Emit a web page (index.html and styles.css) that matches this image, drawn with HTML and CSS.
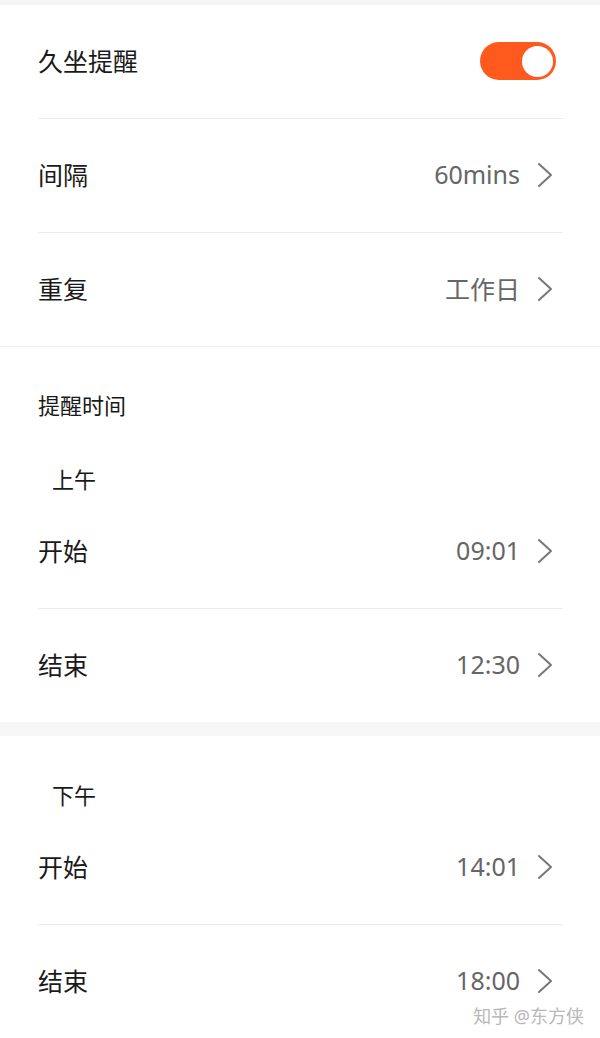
FILE: index.html
```html
<!DOCTYPE html>
<html lang="zh-CN">
<head>
    <meta charset="UTF-8">
    <meta name="viewport" content="width=device-width, initial-scale=1.0">
    <title>久坐提醒</title>
    <link rel="stylesheet" href="styles.css">
</head>
<body>
    <div id="settings-page">
        <div class="top-band"></div>

        <div class="group group-main">
            <div class="row">
                <span class="label">久坐提醒</span>
                <div class="toggle on"><div class="knob"></div></div>
            </div>
            <div class="row">
                <span class="label">间隔</span>
                <span class="value">60mins</span>
                <svg class="chevron" viewBox="0 0 16 26"><polyline points="2,2 14,13 2,24"/></svg>
            </div>
            <div class="row">
                <span class="label">重复</span>
                <span class="value">工作日</span>
                <svg class="chevron" viewBox="0 0 16 26"><polyline points="2,2 14,13 2,24"/></svg>
            </div>
        </div>

        <div class="group">
            <div class="group-title">提醒时间</div>
            <div class="sub-title">上午</div>
            <div class="row">
                <span class="label">开始</span>
                <span class="value">09:01</span>
                <svg class="chevron" viewBox="0 0 16 26"><polyline points="2,2 14,13 2,24"/></svg>
            </div>
            <div class="row">
                <span class="label">结束</span>
                <span class="value">12:30</span>
                <svg class="chevron" viewBox="0 0 16 26"><polyline points="2,2 14,13 2,24"/></svg>
            </div>
        </div>

        <div class="spacer"></div>

        <div class="group">
            <div class="sub-title sub-title-first">下午</div>
            <div class="row">
                <span class="label">开始</span>
                <span class="value">14:01</span>
                <svg class="chevron" viewBox="0 0 16 26"><polyline points="2,2 14,13 2,24"/></svg>
            </div>
            <div class="row">
                <span class="label">结束</span>
                <span class="value">18:00</span>
                <svg class="chevron" viewBox="0 0 16 26"><polyline points="2,2 14,13 2,24"/></svg>
            </div>
        </div>

        <div class="watermark">知乎 @东方侠</div>
    </div>
</body>
</html>
```

FILE: styles.css
```css
body, html {
    margin: 0;
    height: 100%;
    background-color: #fff;
    font-family: "Noto Sans", "Noto Sans CJK SC", sans-serif;
}
#settings-page {
    position: relative;
    width: 600px;
    height: 1038px;
    overflow: hidden;
    background-color: #fff;
}
.top-band {
    height: 5px;
    background-color: #f5f5f5;
}
.group {
    padding: 0 37px 0 38px;
}
.group-main {
    border-bottom: 1px solid #f0f0f0;
}
.row {
    display: flex;
    align-items: center;
    height: 109px;
    padding-bottom: 4px; /* glyphs sit low, nudge the content up */
    border-bottom: 1px solid #ececec;
}
.row:last-child {
    border-bottom: none;
}
.label {
    flex-grow: 1;
    font-size: 25px;
    color: #1a1a1a;
}
.value {
    font-size: 25px;
    color: #666;
    margin-right: 17px;
}
.chevron {
    width: 16px;
    height: 26px;
    margin-right: 10px;
    margin-top: 2px;
    fill: none;
    stroke: #777;
    stroke-width: 2;
    stroke-linecap: round;
    stroke-linejoin: round;
}
.toggle {
    width: 76px;
    height: 38px;
    border-radius: 19px;
    background-color: #ff5a1e;
    display: flex;
    align-items: center;
    justify-content: flex-end;
    margin-right: 7px;
    margin-top: 3px;
    box-sizing: border-box;
    padding-right: 3px;
}
.knob {
    width: 31px;
    height: 31px;
    border-radius: 50%;
    background-color: #fff;
}
.group-title {
    font-size: 22px;
    line-height: 28px;
    color: #1a1a1a;
    padding-top: 44px;
}
.sub-title {
    font-size: 22px;
    line-height: 31px;
    color: #1a1a1a;
    margin-top: 45px;
    padding-left: 14px;
}
.sub-title-first {
    margin-top: 44px;
}
.spacer {
    height: 14px;
    background-color: #f7f7f7;
}
.watermark {
    position: absolute;
    right: 16px;
    bottom: 10px;
    font-size: 18px;
    color: #b8b8b8;
}
```
